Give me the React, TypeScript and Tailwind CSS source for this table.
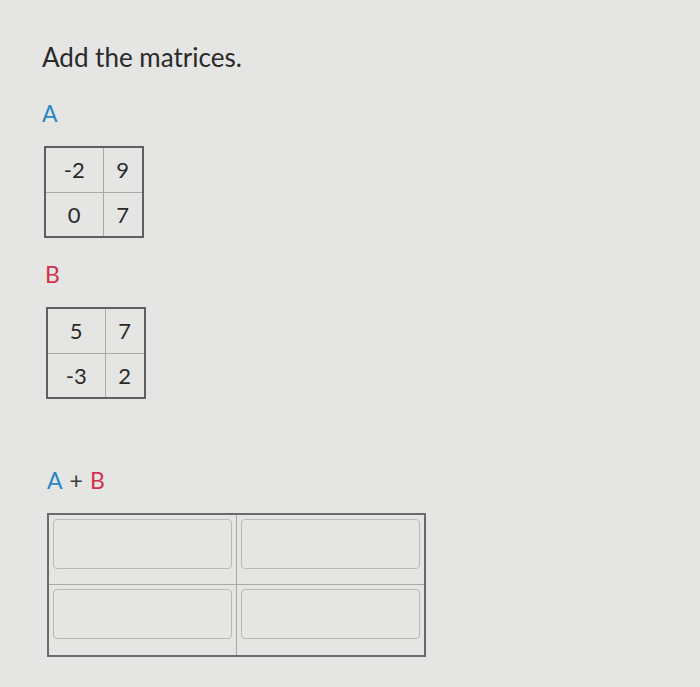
import React from "react";

const matrixA = [
  ["-2", "9"],
  ["0", "7"],
];

const matrixB = [
  ["5", "7"],
  ["-3", "2"],
];

const Matrix = ({ rows, className }: { rows: string[][]; className: string }) => {
  return (
    <table className={`border-collapse border-2 border-[#5f5f5f] ${className}`}>
      <tbody>
        {rows.map((row, i) => (
          <tr key={i}>
            {row.map((cell, j) => (
              <td
                key={j}
                className={`border border-[#a9a9a7] text-center text-[22px] text-[#2a2a2a] h-[45px] ${
                  j === 0 ? "w-[58px]" : "w-[40px]"
                }`}
              >
                {cell}
              </td>
            ))}
          </tr>
        ))}
      </tbody>
    </table>
  );
};

export default function App() {
  return (
    <div className="w-[700px] h-[687px] bg-[#e5e5e3] font-['Lato',sans-serif] text-[#2a2a2a] pl-[42px] pt-[41px]">
      {/* Question */}
      <div className="text-[26px] leading-[32px]">Add the matrices.</div>

      {/* Matrix A */}
      <div className="mt-[28px] text-[23px] leading-[24px] text-[#2a86c2]">A</div>
      <Matrix rows={matrixA} className="mt-[21px] ml-[2px]" />

      {/* Matrix B */}
      <div className="mt-[24px] ml-[3px] text-[23px] leading-[24px] text-[#d22f4c]">B</div>
      <Matrix rows={matrixB} className="mt-[21px] ml-[4px]" />

      {/* A + B */}
      <div className="mt-[69px] ml-[5px] text-[23px] leading-[24px]">
        <span className="text-[#2a86c2]">A</span>
        <span className="text-[#3a3a3a] mx-[7px]">+</span>
        <span className="text-[#d22f4c]">B</span>
      </div>

      {/* Answer grid */}
      <div className="mt-[21px] ml-[5px] w-[379px] border-2 border-[#6a6a6a] grid grid-cols-2">
        {[0, 1, 2, 3].map((i) => (
          <div
            key={i}
            className={`p-[4px] h-[70px] border-[#a9a9a7] ${i % 2 === 0 ? "border-r" : ""} ${
              i < 2 ? "border-b" : ""
            }`}
          >
            <input
              type="text"
              className="w-full h-[50px] rounded-[4px] border border-[#b9b9b7] bg-[#e6e6e4] outline-none"
            />
          </div>
        ))}
      </div>
    </div>
  );
}
